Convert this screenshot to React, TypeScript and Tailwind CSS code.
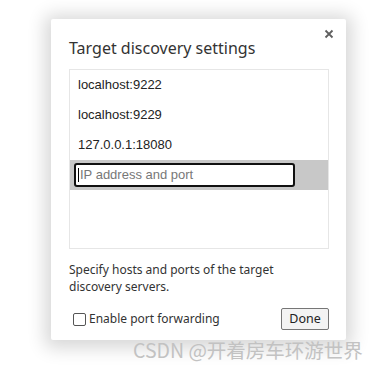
const HOSTS = ["localhost:9222", "localhost:9229", "127.0.0.1:18080"];

export default function App() {
  return (
    <div className="relative w-[379px] h-[369px] bg-white overflow-hidden">
      <div
        className="absolute left-[51px] top-[19px] w-[295px] h-[321px] bg-white rounded-[2px] shadow-[0_2px_18px_6px_rgba(0,0,0,0.16)] flex flex-col pl-[18px] pr-[17px]"
        style={{ fontFamily: '"Segoe UI", "Noto Sans", sans-serif' }}
      >
        <button className="absolute right-[11px] top-[9px] w-[12px] h-[12px] flex items-center justify-center text-[#5f5f5f]">
          <svg width="10" height="10" viewBox="0 0 10 10">
            <path d="M1.5 1.5 L8.5 8.5 M8.5 1.5 L1.5 8.5" stroke="currentColor" strokeWidth="1.8" />
          </svg>
        </button>
        <div className="mt-[18px] text-[16px] leading-[22px] text-[#333]">Target discovery settings</div>
        <div
          className="mt-[10px] h-[180px] border border-[#e6e6e6] flex flex-col"
          style={{ fontFamily: '"Liberation Sans", Arial, sans-serif' }}
        >
          {HOSTS.map((h) => (
            <div key={h} className="h-[30px] flex items-center pl-[8px] text-[13px] text-[#222]">
              {h}
            </div>
          ))}
          <div className="h-[30px] bg-[#c8c8c8] flex items-center pl-[4px]">
            <div className="w-[221px] h-[24px] bg-white border-2 border-[#111] rounded-[3px] flex items-center pl-[2px] text-[13px] text-[#777]">
              <span className="w-px h-[14px] bg-black mr-[1px]" />
              IP address and port
            </div>
          </div>
        </div>
        <div className="mt-[12px] text-[12px] leading-[17px] text-[#333] w-[220px]">
          Specify hosts and ports of the target discovery servers.
        </div>
        <div className="mt-[13px] flex items-center justify-between">
          <label className="flex items-center gap-[3px] pl-[4px] text-[12px] text-[#333]">
            <span className="w-[13px] h-[13px] border border-[#555] rounded-[2px] bg-white" />
            Enable port forwarding
          </label>
          <button className="w-[48px] h-[22px] border border-[#767676] rounded-[2px] bg-[#f3f3f3] text-[12.5px] text-[#222] leading-none">
            Done
          </button>
        </div>
      </div>
      <div
        className="absolute left-[133px] top-[336px] text-[19.5px] leading-[28px] text-[#c2c2c2] whitespace-nowrap"
        style={{ fontFamily: '"Noto Sans CJK SC", sans-serif' }}
      >
        CSDN @开着房车环游世界
      </div>
    </div>
  );
}
